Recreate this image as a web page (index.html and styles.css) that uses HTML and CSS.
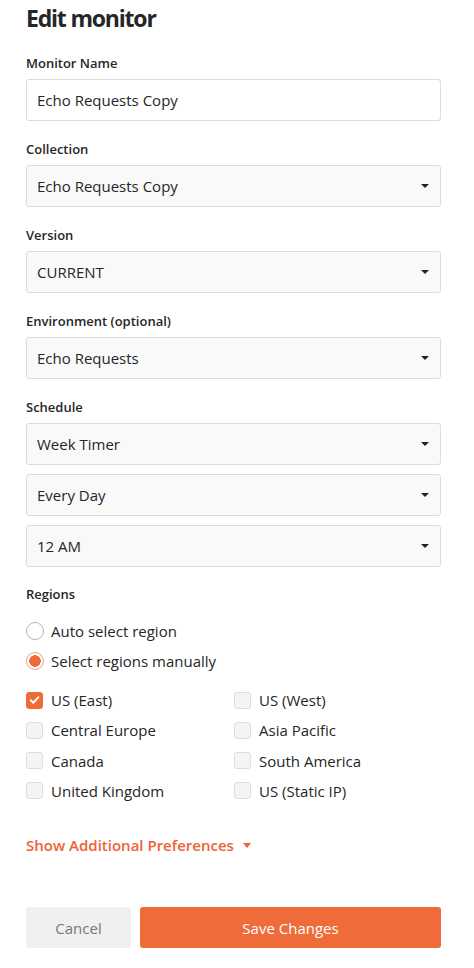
FILE: index.html
```html
<!DOCTYPE html>
<html lang="en">
<head>
<meta charset="utf-8">
<title>Edit monitor</title>
<link rel="stylesheet" href="styles.css">
</head>
<body>
<main class="page">
  <h1 class="title">Edit monitor</h1>

  <div class="field">
    <div class="label">Monitor Name</div>
    <div class="input">Echo Requests Copy</div>
  </div>

  <div class="field">
    <div class="label">Collection</div>
    <div class="select"><span>Echo Requests Copy</span><span class="caret"></span></div>
  </div>

  <div class="field">
    <div class="label">Version</div>
    <div class="select"><span>CURRENT</span><span class="caret"></span></div>
  </div>

  <div class="field">
    <div class="label">Environment (optional)</div>
    <div class="select"><span>Echo Requests</span><span class="caret"></span></div>
  </div>

  <div class="field schedule">
    <div class="label">Schedule</div>
    <div class="stack">
      <div class="select"><span>Week Timer</span><span class="caret"></span></div>
      <div class="select"><span>Every Day</span><span class="caret"></span></div>
      <div class="select"><span>12 AM</span><span class="caret"></span></div>
    </div>
  </div>

  <div class="field regions">
    <div class="label">Regions</div>
    <div class="radios">
      <div class="option"><span class="radio"></span>Auto select region</div>
      <div class="option"><span class="radio on"></span>Select regions manually</div>
    </div>
    <div class="checks">
      <div class="option"><span class="box on"><svg viewBox="0 0 16 16" width="16" height="16"><path d="M4 8.3l2.7 2.7L12 5.2" fill="none" stroke="#fff" stroke-width="2.2" stroke-linecap="round" stroke-linejoin="round"/></svg></span>US (East)</div>
      <div class="option"><span class="box"></span>US (West)</div>
      <div class="option"><span class="box"></span>Central Europe</div>
      <div class="option"><span class="box"></span>Asia Pacific</div>
      <div class="option"><span class="box"></span>Canada</div>
      <div class="option"><span class="box"></span>South America</div>
      <div class="option"><span class="box"></span>United Kingdom</div>
      <div class="option"><span class="box"></span>US (Static IP)</div>
    </div>
  </div>

  <div class="more">Show Additional Preferences <span class="more-caret"></span></div>

  <div class="actions">
    <button class="btn cancel">Cancel</button>
    <button class="btn save">Save Changes</button>
  </div>
</main>
</body>
</html>
```

FILE: styles.css
```css
* { box-sizing: border-box; }

html, body {
  margin: 0;
  padding: 0;
  background: #fff;
}

body {
  font-family: "Open Sans", "Noto Sans", "Liberation Sans", sans-serif;
  color: #333;
}

.page {
  width: 441px;
  padding: 3px 0 0 26px;
  display: flex;
  flex-direction: column;
}

.title {
  margin: 0 0 21px;
  font-size: 23px;
  line-height: 30px;
  font-weight: 700;
  letter-spacing: -1.2px;
  color: #262626;
}

.field {
  display: flex;
  flex-direction: column;
  margin-bottom: 19px;
}

.label {
  font-size: 13px;
  line-height: 18px;
  font-weight: 600;
  color: #262626;
  margin-bottom: 7px;
}

.input,
.select {
  height: 42px;
  border: 1px solid #dcdcdc;
  border-radius: 3px;
  padding: 0 10px;
  font-size: 15px;
  color: #262626;
  display: flex;
  align-items: center;
}

.input {
  background: #fff;
}

.select {
  background: #f9f9f9;
  justify-content: space-between;
}

.caret {
  width: 0;
  height: 0;
  border-left: 4px solid transparent;
  border-right: 4px solid transparent;
  border-top: 4px solid #222;
  margin-right: 1px;
}

.stack {
  display: flex;
  flex-direction: column;
  gap: 9px;
}

.schedule {
  margin-bottom: 18px;
}

.regions {
  margin-bottom: 0;
}

.regions .label {
  margin-bottom: 13px;
}

.option {
  height: 30px;
  display: flex;
  align-items: center;
  font-size: 15px;
  color: #262626;
}

.radios {
  display: flex;
  flex-direction: column;
  margin-bottom: 9px;
}

.radio {
  width: 18px;
  height: 18px;
  border-radius: 50%;
  border: 1px solid #b5b5b5;
  background: #fff;
  margin-right: 7px;
  flex: none;
}

.radio.on {
  border: 1px solid #f4a07f;
  background: radial-gradient(circle, #ef6a37 0 5.5px, #fff 6px);
}

.checks {
  display: grid;
  grid-template-columns: 208px 1fr;
  grid-auto-rows: 30.3px;
}

.box {
  width: 17px;
  height: 17px;
  border: 1px solid #dedede;
  border-radius: 3px;
  background: #f4f4f4;
  margin-right: 8px;
  flex: none;
  display: flex;
  align-items: center;
  justify-content: center;
}

.box.on {
  background: #ef6a37;
  border-color: #ef6a37;
}

.box svg {
  display: block;
}

.more {
  margin-top: 29px;
  font-size: 15px;
  line-height: 20px;
  font-weight: 600;
  color: #ef6233;
  display: flex;
  align-items: center;
}

.more-caret {
  width: 0;
  height: 0;
  border-left: 4.5px solid transparent;
  border-right: 4.5px solid transparent;
  border-top: 5px solid #ef6233;
  margin-left: 9px;
}

.actions {
  margin-top: 52px;
  display: flex;
  gap: 9px;
}

.btn {
  height: 41px;
  border: none;
  border-radius: 3px;
  font-family: inherit;
  font-size: 15px;
  padding: 0;
}

.cancel {
  width: 105px;
  background: #f0f0f0;
  color: #777;
}

.save {
  flex: 1;
  background: #f06b3a;
  color: #fff;
}
```
